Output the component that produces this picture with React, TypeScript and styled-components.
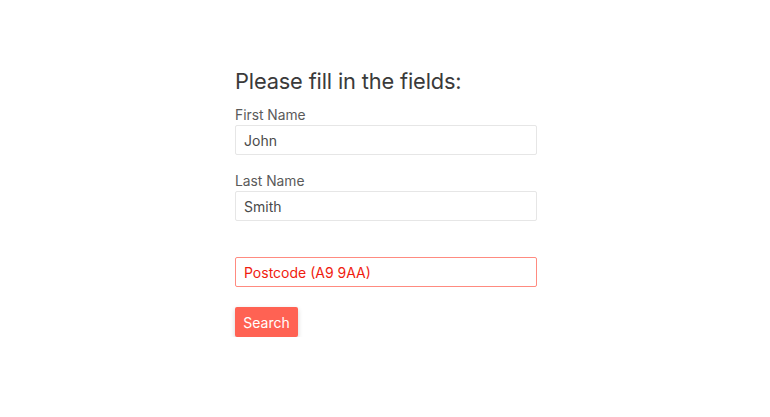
import React from "react";
import styled, { createGlobalStyle } from "styled-components";

const Global = createGlobalStyle`
  html, body { margin: 0; padding: 0; background: #fff; }
  body { font-family: Inter, "Noto Sans", sans-serif; -webkit-font-smoothing: antialiased; }
  * { box-sizing: border-box; }
`;

const Page = styled.div`
  display: flex;
  justify-content: center;
  padding: 66px 0 0 2px;
`;

const Form = styled.form`
  width: 302px;
  display: flex;
  flex-direction: column;
`;

const Heading = styled.h1`
  margin: 0 0 10px;
  font-size: 21.8px;
  line-height: 30px;
  font-weight: 400;
  color: #3a3a3a;
  letter-spacing: -0.15px;
`;

const Field = styled.div<{ $gap?: number }>`
  display: flex;
  flex-direction: column;
  margin-bottom: ${(p) => p.$gap ?? 17}px;
`;

const Label = styled.label`
  font-size: 13.8px;
  line-height: 18px;
  color: #5a5a5a;
  height: 19px;
  display: block;
`;

const Input = styled.input<{ $error?: boolean }>`
  height: 30px;
  width: 100%;
  padding: 0 8px;
  font-family: inherit;
  font-size: 14px;
  color: ${(p) => (p.$error ? "#f01c10" : "#4a4a4a")};
  border: 1px solid ${(p) => (p.$error ? "#ff8b80" : "#e6e6e6")};
  border-radius: 2px;
  outline: none;
  background: #fff;
  &::placeholder { color: #f01c10; opacity: 1; }
`;

const Button = styled.button`
  align-self: flex-start;
  height: 30px;
  width: 63px;
  padding: 0;
  border: none;
  border-radius: 2px;
  background: #ff6253;
  color: #fff;
  font-family: inherit;
  font-size: 14px;
  box-shadow: 0 2px 5px rgba(0, 0, 0, 0.18);
  cursor: pointer;
`;

export default function App() {
  return (
    <>
      <Global />
      <Page>
        <Form onSubmit={(e) => e.preventDefault()}>
          <Heading>Please fill in the fields:</Heading>
          <Field>
            <Label>First Name</Label>
            <Input defaultValue="John" />
          </Field>
          <Field>
            <Label>Last Name</Label>
            <Input defaultValue="Smith" />
          </Field>
          <Field $gap={20}>
            <Label />
            <Input $error placeholder="Postcode (A9 9AA)" />
          </Field>
          <Button type="submit">Search</Button>
        </Form>
      </Page>
    </>
  );
}
